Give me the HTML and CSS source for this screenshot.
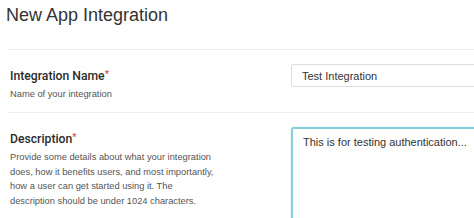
FILE: index.html
```html
<!DOCTYPE html>
<html lang="en">
<head>
    <meta charset="UTF-8">
    <meta name="viewport" content="width=device-width, initial-scale=1.0">
    <title>New App Integration</title>
    <link rel="stylesheet" href="styles.css">
</head>
<body>
    <div class="page">
        <h1 class="page-title">New App Integration</h1>

        <div class="form">
            <div class="form-row">
                <div class="field-info">
                    <label class="field-label" for="appName">Integration Name<span class="required">*</span></label>
                    <p class="field-help">Name of your integration</p>
                </div>
                <div class="field-control">
                    <input id="appName" class="text-input" type="text" value="Test Integration">
                </div>
            </div>

            <div class="form-row">
                <div class="field-info">
                    <label class="field-label" for="appDesc">Description<span class="required">*</span></label>
                    <p class="field-help">Provide some details about what your integration does, how it benefits users, and most importantly, how a user can get started using it. The description should be under 1024 characters.</p>
                </div>
                <div class="field-control">
                    <textarea id="appDesc" class="text-area">This is for testing authentication...</textarea>
                </div>
            </div>
        </div>
    </div>
</body>
</html>
```

FILE: styles.css
```css
* {
    margin: 0;
    padding: 0;
    box-sizing: border-box;
    font-family: "Liberation Sans", Arial, sans-serif;
}

html, body {
    background: white;
    overflow: hidden;
}

.page {
    width: 640px;
    padding: 4px 0 0 6px;
}

.page-title {
    font-size: 18px;
    font-weight: normal;
    color: #333;
    line-height: 22px;
    margin-bottom: 23px;
}

.form-row {
    display: flex;
    border-top: 1px solid #eee;
    margin-left: 2px;
    padding: 14px 0 11px 2px;
}

.field-info {
    width: 281px;
    flex-shrink: 0;
    padding-top: 4px;
}

.field-label {
    display: block;
    font-family: Roboto, "Liberation Sans", sans-serif;
    font-size: 12.2px;
    font-weight: 500;
    color: #2b2b2b;
    line-height: 16px;
    margin-bottom: 3px;
}

.required {
    color: #d0342c;
    font-size: 11px;
    line-height: 12px;
    vertical-align: top;
}

.field-help {
    font-size: 9.3px;
    color: #555;
    line-height: 14.4px;
    width: 206px;
}

.field-control {
    flex: 1;
}

.text-input {
    width: 100%;
    height: 23px;
    border: 1px solid #ddd;
    border-radius: 2px;
    padding: 0 10px;
    font-size: 11px;
    color: #333;
    outline: none;
}

.text-area {
    display: block;
    width: 100%;
    height: 120px;
    border: 2px solid #86d0dc;
    border-radius: 3px;
    padding: 7px 10px;
    font-size: 11px;
    color: #333;
    resize: none;
    outline: none;
    box-shadow: 0 0 2px rgba(120, 200, 215, 0.5);
}
```
